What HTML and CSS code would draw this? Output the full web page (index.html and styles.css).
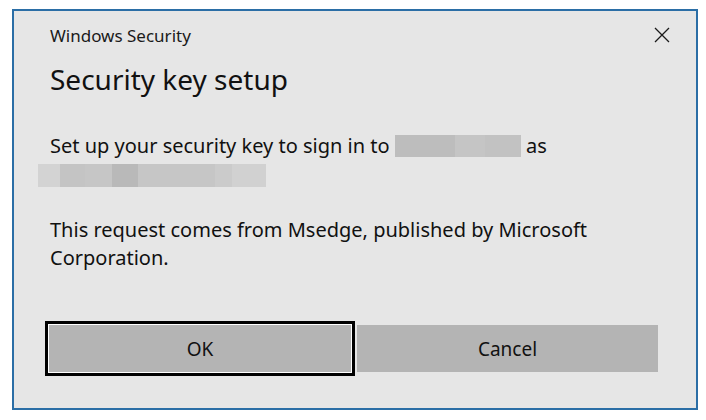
FILE: index.html
```html
<!DOCTYPE html>
<html lang="en">
<head>
<meta charset="utf-8">
<title>Windows Security</title>
<link rel="stylesheet" href="styles.css">
</head>
<body>
<div class="dialog">
  <div class="header">
    <div class="caption">Windows Security</div>
    <button class="close" aria-label="Close">
      <svg width="16" height="16" viewBox="0 0 16 16"><path d="M1 1 L15 15 M15 1 L1 15" stroke="#1a1a1a" stroke-width="1.3" fill="none"/></svg>
    </button>
  </div>
  <h1 class="title">Security key setup</h1>
  <p class="text">Set up your security key to sign in to <span class="blur blur-site"></span> as<br><span class="blur blur-user"></span></p>
  <p class="text text-second">This request comes from Msedge, published by Microsoft Corporation.</p>
  <div class="buttons">
    <button class="btn btn-ok">OK</button>
    <button class="btn btn-cancel">Cancel</button>
  </div>
</div>
</body>
</html>
```
FILE: styles.css
```css
html, body {
  margin: 0;
  padding: 0;
  background: #ffffff;
}
body {
  font-family: "Noto Sans", "Open Sans", sans-serif;
  color: #111111;
}
.dialog {
  box-sizing: border-box;
  margin: 9px 0 0 12px;
  width: 686px;
  height: 401px;
  border: 2px solid #2b6ea6;
  background: #e6e6e6;
  padding: 0 0 0 36px;
  display: flex;
  flex-direction: column;
}
.header {
  display: flex;
  align-items: center;
  justify-content: space-between;
  height: 30px;
  margin-top: 9px;
  padding-right: 26px;
}
.caption {
  font-size: 17px;
  color: #1a1a1a;
}
.close {
  border: 0;
  background: transparent;
  padding: 0;
  width: 16px;
  height: 16px;
  display: flex;
}
.title {
  font-size: 28px;
  font-weight: 400;
  margin: 11px 0 0 0;
  line-height: 36px;
  color: #111111;
}
.text {
  font-size: 20px;
  line-height: 28px;
  margin: 35px 0 0 0;
  max-width: 560px;
}
.text-second {
  margin-top: 28px;
}
.blur {
  display: inline-block;
}
.blur-site {
  vertical-align: -4px;
  width: 126px;
  height: 22px;
  background: linear-gradient(to right, #bdbdbd 0 60px, #c5c5c5 60px 90px, #c2c2c2 90px);
}
.blur-user {
  vertical-align: -6px;
  margin-left: -12px;
  width: 228px;
  height: 23px;
  background: linear-gradient(to right, #d3d3d3 0 22px, #c4c4c4 22px 47px, #c6c6c6 47px 74px, #b9b9b9 74px 100px, #c6c6c6 100px 177px, #cbcbcb 177px 194px, #d1d1d1 194px);
}
.buttons {
  display: flex;
  align-items: center;
  margin-top: auto;
  margin-bottom: 32px;
  margin-left: -5px;
}
.btn {
  box-sizing: border-box;
  font-family: "Noto Sans", "Open Sans", sans-serif;
  font-size: 19px;
  color: #111111;
  background: #b4b4b4;
  border: 0;
  padding: 0;
}
.btn-ok {
  width: 310px;
  height: 55px;
  border: 3px solid #000000;
  box-shadow: inset 0 0 0 1px #ffffff;
}
.btn-cancel {
  width: 301px;
  height: 47px;
  margin-left: 2px;
}
```
